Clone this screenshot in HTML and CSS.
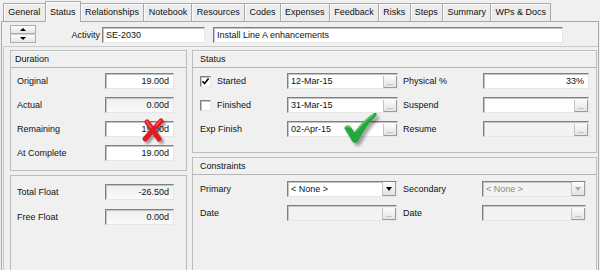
FILE: index.html
```html
<!DOCTYPE html>
<html>
<head>
<meta charset="utf-8">
<title>Status</title>
<link rel="stylesheet" href="styles.css">
</head>
<body>
<div class="win">
  <div class="tabs">
    <div class="tab">General</div>
    <div class="tab active">Status</div>
    <div class="tab">Relationships</div>
    <div class="tab">Notebook</div>
    <div class="tab">Resources</div>
    <div class="tab">Codes</div>
    <div class="tab">Expenses</div>
    <div class="tab">Feedback</div>
    <div class="tab">Risks</div>
    <div class="tab">Steps</div>
    <div class="tab">Summary</div>
    <div class="tab">WPs &amp; Docs</div>
  </div>
  <div class="page">
    <div class="toolbar">
      <div class="spin">
        <div class="spin-btn"><span class="tri-up"></span></div>
        <div class="spin-btn"><span class="tri-down"></span></div>
      </div>
      <span class="act-label">Activity</span>
      <div class="field f-id">SE-2030</div>
      <div class="field f-name">Install Line A enhancements</div>
    </div>
    <div class="content">
      <div class="col-left">
        <div class="group g-dur">
          <div class="ghead">Duration</div>
          <div class="gbody rows">
            <div class="row"><span class="lbl">Original</span><div class="field num">19.00d</div></div>
            <div class="row"><span class="lbl">Actual</span><div class="field num ro">0.00d</div></div>
            <div class="row"><span class="lbl">Remaining</span><div class="field num">19.00d</div></div>
            <div class="row"><span class="lbl">At Complete</span><div class="field num">19.00d</div></div>
          </div>
        </div>
        <div class="group g-flt">
          <div class="gbody rows rows-flt">
            <div class="row"><span class="lbl">Total Float</span><div class="field num ro">-26.50d</div></div>
            <div class="row"><span class="lbl">Free Float</span><div class="field num ro">0.00d</div></div>
          </div>
        </div>
      </div>
      <div class="col-right">
        <div class="group g-status">
          <div class="ghead hr">Status</div>
          <div class="gbody grid grid-status">
            <div class="cell"><span class="cb"><svg width="9" height="9" viewBox="0 0 9 9"><path d="M1.5 4.2 L3.6 6.6 L7.6 1.6" fill="none" stroke="#000" stroke-width="1.6"/></svg></span>Started</div>
            <div class="field btnf"><span class="txt">12-Mar-15</span><span class="ell">...</span></div>
            <div class="cell c3">Physical %</div>
            <div class="field num">33%</div>

            <div class="cell"><span class="cb"></span>Finished</div>
            <div class="field btnf"><span class="txt">31-Mar-15</span><span class="ell">...</span></div>
            <div class="cell c3">Suspend</div>
            <div class="field btnf"><span class="txt"></span><span class="ell">...</span></div>

            <div class="cell">Exp Finish</div>
            <div class="field btnf"><span class="txt">02-Apr-15</span><span class="ell">...</span></div>
            <div class="cell c3">Resume</div>
            <div class="field btnf dis"><span class="txt"></span><span class="ell">...</span></div>
          </div>
        </div>
        <div class="group g-cons">
          <div class="ghead hr">Constraints</div>
          <div class="gbody grid grid-cons">
            <div class="cell">Primary</div>
            <div class="field btnf sel"><span class="txt">&lt; None &gt;</span><span class="drop"><span class="tri-down"></span></span></div>
            <div class="cell c3">Secondary</div>
            <div class="field btnf sel dis"><span class="txt">&lt; None &gt;</span><span class="drop"><span class="tri-down"></span></span></div>

            <div class="cell">Date</div>
            <div class="field btnf dis"><span class="txt"></span><span class="ell">...</span></div>
            <div class="cell c3">Date</div>
            <div class="field btnf dis"><span class="txt"></span><span class="ell">...</span></div>
          </div>
        </div>
      </div>
    </div>
  </div>

  <svg class="mark-x" width="26" height="28" viewBox="0 0 26 28">
    <defs><filter id="blur1" x="-30%" y="-30%" width="160%" height="160%"><feGaussianBlur stdDeviation="1.1"/></filter></defs>
    <g transform="translate(2.5,2.5)" filter="url(#blur1)" stroke="#000" stroke-opacity="0.35" stroke-width="5" stroke-linecap="round" fill="none">
      <path d="M6 5 L18 22 M20 4 L4 22"/>
    </g>
    <g stroke="#e21a22" stroke-width="5" stroke-linecap="round" fill="none">
      <path d="M6 5 L18 22 M20 4 L4 22"/>
    </g>
    <g stroke="#f4686c" stroke-width="1.4" stroke-linecap="round" fill="none" opacity="0.8">
      <path d="M5.5 4.5 L10 10.5 M19.5 3.5 L15 8.5"/>
    </g>
  </svg>

  <svg class="mark-ok" width="40" height="38" viewBox="0 0 38 36">
    <defs><filter id="blur2" x="-30%" y="-30%" width="160%" height="160%"><feGaussianBlur stdDeviation="1.3"/></filter></defs>
    <path transform="translate(2.5,3)" filter="url(#blur2)" fill="#000" fill-opacity="0.35" d="M3 17 Q5 13 9 15.5 L12.5 21 Q21 9.5 31 3 Q34.5 1.5 34 5 Q24 14.5 16.5 29 Q14 33 11 30 Z"/>
    <path fill="#22a83c" d="M3 17 Q5 13 9 15.5 L12.5 21 Q21 9.5 31 3 Q34.5 1.5 34 5 Q24 14.5 16.5 29 Q14 33 11 30 Z"/>
    <path fill="none" stroke="#74d46e" stroke-width="1.3" stroke-linecap="round" opacity="0.85" d="M4.5 16 Q6.5 14.5 8.5 16.5 M14 20 Q22 10.5 30.5 4.2"/>
  </svg>
</div>
</body>
</html>
```
FILE: styles.css
```css
* { box-sizing: border-box; margin: 0; padding: 0; }
html, body { width: 600px; height: 270px; overflow: hidden; }
body {
  background: #f0f0f0;
  font-family: "Liberation Sans", Arial, sans-serif;
  font-size: 9px;
  color: #111;
}
.win { position: relative; width: 600px; height: 270px; }

/* tabs */
.tabs { display: flex; align-items: flex-end; height: 21px; padding-left: 3px; }
.tab {
  height: 18px;
  padding: 0 4.3px;
  line-height: 16px;
  border: 1px solid #a9a9a9;
  border-bottom: none;
  margin-left: -1px;
  background: #ececec;
  box-shadow: inset 1px 1px 0 #fbfbfb;
  white-space: nowrap;
}
.tab:first-child { margin-left: 0; }
.tab.active {
  height: 21px;
  line-height: 20px;
  margin-bottom: -1px;
  position: relative;
  z-index: 1;
  background: #f0f0f0;
}

/* page */
.page {
  margin: 0 1px;
  height: 249px;
  border: 1px solid #a9a9a9;
  border-bottom: none;
}
.toolbar { display: flex; align-items: flex-end; height: 21px; padding-top: 3px; }
.spin { margin-left: 8px; width: 26px; height: 18px; display: flex; flex-direction: column; }
.spin-btn {
  flex: 1;
  border: 1px solid #acacac;
  background: linear-gradient(#fdfdfd, #e5e5e5);
  display: flex;
  align-items: center;
  justify-content: center;
}
.spin-btn + .spin-btn { border-top: 1px solid #d0d0d0; }
.tri-up { width: 0; height: 0; border-left: 3px solid transparent; border-right: 3px solid transparent; border-bottom: 3px solid #000; }
.tri-down { width: 0; height: 0; border-left: 3px solid transparent; border-right: 3px solid transparent; border-top: 3px solid #000; }
.act-label { width: 66px; text-align: right; padding-right: 2px; line-height: 16px; }

/* fields */
.field {
  height: 16px;
  background: #fff;
  border: 1px solid;
  border-color: #808080 #e6e6e6 #e6e6e6 #808080;
  box-shadow: inset 1px 1px 0 #c4c4c4;
  padding: 0 3px;
  white-space: nowrap;
  overflow: hidden;
  display: flex;
  align-items: center;
}
.f-id { width: 103px; }
.f-name { width: 350px; margin-left: 8px; }
.num { justify-content: flex-end; padding-right: 4px; }
.ro { background: linear-gradient(#eeeeee, #fafafa); }
.dis { background: #f3f3f3; }
.btnf { justify-content: space-between; align-items: stretch; padding-right: 0; }
.btnf .txt { display: flex; align-items: center; }
.ell {
  width: 14px;
  margin-top: 2px;
  background: linear-gradient(#fafafa, #e4e4e4);
  border-left: 1px solid #c4c4c4;
  border-right: 1px solid #9c9c9c;
  border-bottom: 1px solid #9c9c9c;
  color: #666;
  font-size: 7px;
  line-height: 9px;
  display: flex;
  align-items: flex-end;
  justify-content: center;
}
.drop {
  width: 14px;
  background: linear-gradient(#fdfdfd, #e2e2e2);
  border-left: 1px solid #c4c4c4;
  border-right: 1px solid #9c9c9c;
  border-bottom: 1px solid #9c9c9c;
  display: flex;
  align-items: center;
  justify-content: center;
}
.drop .tri-down { border-left-width: 3.5px; border-right-width: 3.5px; border-top-width: 4px; }
.sel.dis .txt { color: #8c8c8c; }
.sel.dis .drop .tri-down { border-top-color: #a8a8a8; }

/* content */
.content {
  margin: 3px 0 0 1px;
  height: 230px;
  border-top: 1px solid #cacaca;
  border-left: 1px solid #cacaca;
  padding: 3px 0 0 6px;
  display: flex;
  gap: 5px;
}
.col-left { width: 177px; display: flex; flex-direction: column; gap: 4px; }
.col-right { width: 405px; display: flex; flex-direction: column; gap: 4px; }
.group { border: 1px solid #bdbdbd; }
.ghead {
  height: 17px;
  line-height: 16px;
  padding-left: 4px;
  border-bottom: 1px solid #b5b5b5;
  box-shadow: inset 0 1px 0 #f8f8f8;
}
.ghead.hr { padding-left: 7px; }
.g-flt, .g-cons { flex: 1; border-bottom: none; }

.rows { display: flex; flex-direction: column; gap: 8px; padding: 5px 0 9px 6px; }
.rows-flt { padding-top: 8px; gap: 9px; }
.row { display: flex; height: 16px; align-items: center; }
.lbl { width: 88px; }
.row .field { width: 69px; }

.grid { display: grid; grid-auto-rows: 16px; row-gap: 8px; padding-left: 7px; }
.grid-status { grid-template-columns: 87px 111px 85px 106px; padding-top: 5px; padding-bottom: 15px; }
.grid-cons { grid-template-columns: 87px 110px 85px 104px; padding-top: 6px; }
.cell { display: flex; align-items: center; }
.c3 { padding-left: 5px; }
.grid-cons .c3 { padding-left: 6px; }
.cb {
  width: 11px;
  height: 11px;
  margin-right: 6px;
  background: #fff;
  border: 1px solid;
  border-color: #808080 #e6e6e6 #e6e6e6 #808080;
  box-shadow: inset 1px 1px 0 #c4c4c4;
  display: flex;
  align-items: center;
  justify-content: center;
}
.cb svg { display: block; }

/* overlays */
.mark-x { position: absolute; left: 141px; top: 117px; }
.mark-ok { position: absolute; left: 341px; top: 110px; }
```
